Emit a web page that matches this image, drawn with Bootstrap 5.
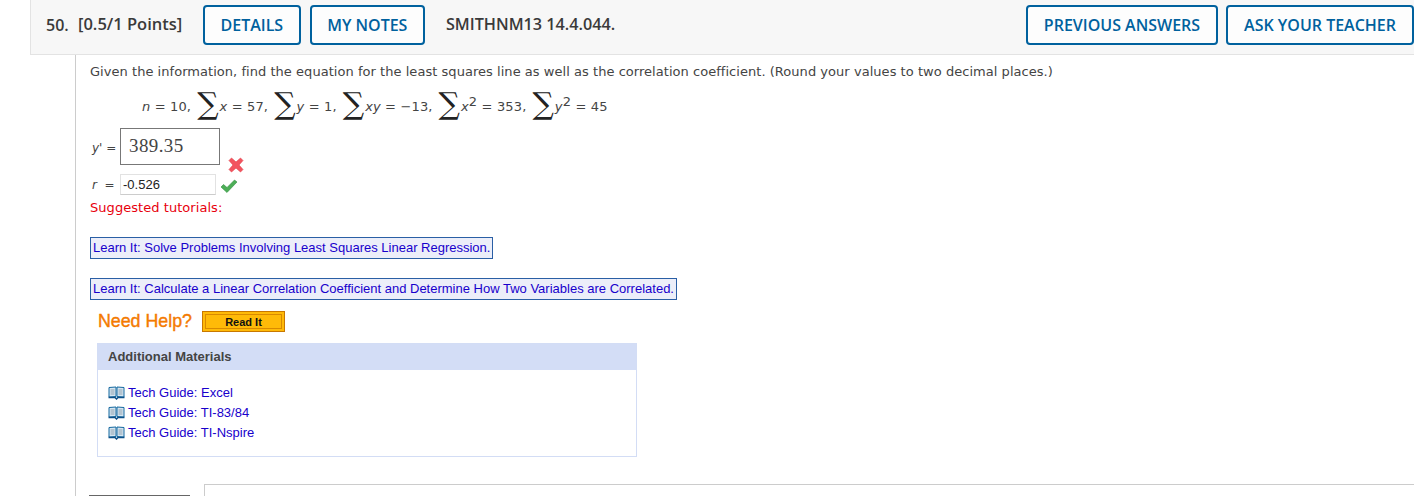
<!DOCTYPE html>
<html lang="en">
<head>
<meta charset="utf-8">
<title>Question 50</title>
<link href="https://cdn.jsdelivr.net/npm/bootstrap@5.3.0/dist/css/bootstrap.min.css" rel="stylesheet">
<style>
html,body{height:496px;overflow:hidden;background:#fff}
body{font-family:"DejaVu Sans",sans-serif;font-size:13px;color:#444}
.qhead{margin-left:30px;height:55px;background:#f7f7f7;border:1px solid #e3e3e3;border-width:0 0 1px 1px;font-family:"Open Sans",sans-serif;font-weight:600;font-size:16px;color:#3a3a3a;padding-bottom:5px}
.qnum{margin-left:15px;width:32px}
.qpts{width:125px;font-size:16.5px;white-space:nowrap}
.qbtn{height:40px;border:2px solid #00619e;border-radius:4px;color:#00619e;font-weight:600;font-size:16px;padding:0 16px;background:#fdfdfd;font-family:"Open Sans",sans-serif;line-height:36px}
.qbtn-tight{padding:0 15.5px}
.qbtn-next{margin-left:1px}
.qcode{padding-left:5px;font-size:16.2px}
.qbody{margin-left:75px;border-left:1px solid #ccc;height:441px;position:relative;padding-left:14px}
.qtext{padding-top:8px;font-size:13px;line-height:18px;letter-spacing:.04px;margin-bottom:0}
.eqline{margin-left:52px;height:36px;font-size:13px;margin-top:8px;letter-spacing:.15px}
.eqline sup{font-size:1em;top:-.4em;line-height:0}
.sig{font-size:30px;line-height:20px;color:#222;font-family:"DejaVu Serif",serif;margin:0 1px 0 6px;position:relative;top:-3px;letter-spacing:0}
.mvar{font-style:italic}
.yrow{height:46px;margin-top:3px}
.ylab{width:30px;font-size:12px;padding-left:2px;height:40px}
.bigin{width:100px;height:37px;border:1px solid #777;font-family:"Liberation Serif",serif;font-size:19px;line-height:33px;padding-left:8px;color:#444;letter-spacing:.4px}
.rrow{height:22px;margin-top:-1px}
.rrow .ylab{height:auto;padding-top:2px}
.rin{width:96px;height:21px;border:1px solid #e2e2e2;border-bottom-color:#ccc;font-family:"Liberation Sans",sans-serif;font-size:13px;line-height:20px;padding-left:2px;color:#222}
.xmark{margin-left:7px;align-self:flex-start;margin-top:28px}
.chk{margin-top:4px}
.sugg{color:#e8000d;font-size:13px;line-height:18px;margin-top:4px;letter-spacing:.05px}
.tut{display:block;width:max-content;border:1px solid #2a5fa5;background:#eceef9;font-family:"Liberation Sans",sans-serif;font-size:13px;line-height:20px;color:#1800cc;padding:0 2px;text-decoration:none}
.helprow{margin:9px 0 0 8px;height:24px}
.needh{font-family:"Liberation Sans",sans-serif;font-size:17.800px;font-weight:400;color:#f47a00;width:104px;-webkit-text-stroke:.4px #f47a00}
.readit{width:83px;height:21px;border:1px solid #c87800;background:#ffba08;box-shadow:inset 0 0 0 2px #ffba08,inset 0 0 0 3px #d98a00;font-family:"Liberation Sans",sans-serif;font-weight:700;font-size:11px;line-height:20px;color:#111;text-align:center}
.matbox{margin:10px 0 0 7px;width:540px;height:114px;border:1px solid #d3ddf5}
.mathead{background:#d3ddf6;height:26px;font-family:"Liberation Sans",sans-serif;font-weight:700;font-size:13px;line-height:26px;padding-left:10px;color:#444}
.matlist{padding:13px 0 0 10px;font-family:"Liberation Sans",sans-serif;font-size:13px}
.matlink{display:flex;align-items:center;gap:3px;height:20px;color:#1800cc;text-decoration:none}
.foot{position:absolute;left:13px;right:0;top:429px;height:12px}
.footline{position:absolute;left:0;bottom:0;width:101px;height:1px;background:#666}
.footbox{position:absolute;left:115px;right:0;top:0;height:20px;border:1px solid #ccc;border-right:0}
</style>
</head>
<body>
<div class="qhead d-flex align-items-center">
  <div class="qnum">50.</div>
  <div class="qpts">[0.5/1 Points]</div>
  <div class="qbtn qbtn-tight me-2">DETAILS</div>
  <div class="qbtn qbtn-tight qbtn-next">MY NOTES</div>
  <div class="qcode ms-3 flex-grow-1 text-nowrap">SMITHNM13 14.4.044.</div>
  <div class="qbtn me-2">PREVIOUS ANSWERS</div>
  <div class="qbtn">ASK YOUR TEACHER</div>
</div>
<div class="qbody">
  <p class="qtext text-nowrap">Given the information, find the equation for the least squares line as well as the correlation coefficient. (Round your values to two decimal places.)</p>
  <div class="eqline d-flex align-items-center text-nowrap">
    <span><span class="mvar">n</span> = 10,</span><span class="sig">∑</span><span><span class="mvar">x</span> = 57,</span><span class="sig">∑</span><span><span class="mvar">y</span> = 1,</span><span class="sig">∑</span><span><span class="mvar">xy</span> = −13,</span><span class="sig">∑</span><span><span class="mvar">x</span><sup>2</sup> = 353,</span><span class="sig">∑</span><span><span class="mvar">y</span><sup>2</sup> = 45</span>
  </div>
  <div class="yrow d-flex">
    <div class="ylab d-flex align-items-center"><span><span class="mvar">y'</span> =</span></div>
    <div class="bigin">389.35</div>
    <svg class="xmark" width="18" height="18" viewBox="0 0 18 18"><path d="M2 4.500 4.500 2 9 6 13.500 2 16 4.500 12 9 16 13.500 13.500 16 9 12 4.500 16 2 13.500 6 9Z" fill="#f2545f" stroke="#e23a46" stroke-width=".6"/></svg>
  </div>
  <div class="rrow d-flex align-items-center">
    <div class="ylab"><span class="mvar">r</span>&nbsp; =</div>
    <div class="rin">-0.526</div>
    <svg class="ms-1 chk" width="18" height="16" viewBox="0 0 18 16"><path d="M1 9 3.500 6.500 7 9.500 14.500 2 17 4 7 14.500Z" fill="#4dae57" stroke="#2f8f3e" stroke-width=".6"/></svg>
  </div>
  <div class="sugg">Suggested tutorials:</div>
  <a class="tut" href="#" style="margin-top:20px">Learn It: Solve Problems Involving Least Squares Linear Regression.</a>
  <a class="tut" href="#" style="margin-top:19px">Learn It: Calculate a Linear Correlation Coefficient and Determine How Two Variables are Correlated.</a>
  <div class="helprow d-flex align-items-center">
    <div class="needh">Need Help?</div>
    <div class="readit">Read It</div>
  </div>
  <div class="matbox">
    <div class="mathead">Additional Materials</div>
    <div class="matlist">
      <a class="matlink" href="#"><svg width="17" height="14" viewBox="0 0 17 14"><path d="M1 1.500 8 1v9.500L1 11Z M16 1.500 9 1v9.500l7 .5Z" fill="#d5e6f2" stroke="#14689f"/><path d="M.5 11.500h6.500l1.500 1.500 1.500-1.500h6.500" fill="none" stroke="#0b4f87" stroke-width="1.500"/><path d="M2.500 4h4M2.500 6h4M2.500 8h4M10.500 4h4M10.500 6h4M10.500 8h4" stroke="#8fa1ae"/></svg>Tech Guide: Excel</a>
      <a class="matlink" href="#"><svg width="17" height="14" viewBox="0 0 17 14"><path d="M1 1.500 8 1v9.500L1 11Z M16 1.500 9 1v9.500l7 .5Z" fill="#d5e6f2" stroke="#14689f"/><path d="M.5 11.500h6.500l1.500 1.500 1.500-1.500h6.500" fill="none" stroke="#0b4f87" stroke-width="1.500"/><path d="M2.500 4h4M2.500 6h4M2.500 8h4M10.500 4h4M10.500 6h4M10.500 8h4" stroke="#8fa1ae"/></svg>Tech Guide: TI-83/84</a>
      <a class="matlink" href="#"><svg width="17" height="14" viewBox="0 0 17 14"><path d="M1 1.500 8 1v9.500L1 11Z M16 1.500 9 1v9.500l7 .5Z" fill="#d5e6f2" stroke="#14689f"/><path d="M.5 11.500h6.500l1.500 1.500 1.500-1.500h6.500" fill="none" stroke="#0b4f87" stroke-width="1.500"/><path d="M2.500 4h4M2.500 6h4M2.500 8h4M10.500 4h4M10.500 6h4M10.500 8h4" stroke="#8fa1ae"/></svg>Tech Guide: TI-Nspire</a>
    </div>
  </div>
  <div class="foot"><div class="footline"></div><div class="footbox"></div></div>
</div>
<script src="https://cdn.jsdelivr.net/npm/bootstrap@5.3.0/dist/js/bootstrap.bundle.min.js"></script>
</body>
</html>
